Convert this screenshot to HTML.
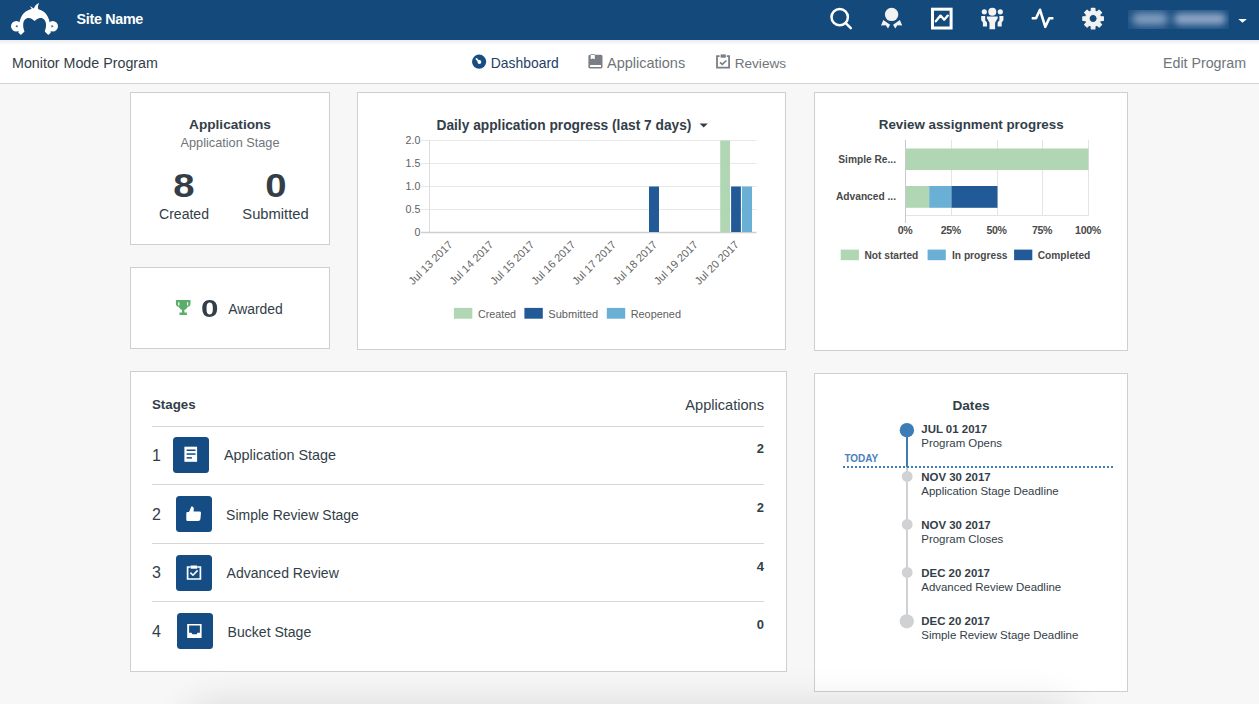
<!DOCTYPE html>
<html><head><meta charset="utf-8">
<style>
*{margin:0;padding:0;box-sizing:border-box}
html,body{width:1259px;height:704px;overflow:hidden;background:#f7f7f7;font-family:"Liberation Sans",sans-serif;color:#333e48}
#hdr{position:absolute;left:0;top:0;width:1259px;height:40px;background:#13497b}
#sub{position:absolute;left:0;top:40px;width:1259px;height:44px;background:#fff;border-bottom:1px solid #d2d2d2}
.card{position:absolute;background:#fff;border:1px solid #cfcfcf}
.t{position:absolute;white-space:nowrap;line-height:1}
svg{position:absolute;overflow:visible}
</style></head><body>
<div id="hdr"></div>
<svg style="left:0;top:0" width="70" height="40" viewBox="0 0 70 40">
<g fill="#fff">
<path d="M39.2,3 C36,4.3 34.2,6.4 33.8,9 L38.2,9.3 C37.6,7 38.1,4.8 39.2,3 Z"/>
<path d="M29.9,5.9 L32,9.6 L35,9.2 Z"/>
<path fill-rule="evenodd" d="M20.9,34.9 L18.3,32.4 L19.3,28.5 C18.3,16.5 25.2,8.8 34.6,8.8 C44,8.8 50.9,16.5 49.9,28.5 L50.9,32.4 L48.3,34.9 L44.7,31.4 C45.9,28.4 46.1,26 46,24.2 C45.8,20.5 43.6,18 40.6,18 C38.1,18 36.2,19.6 34.6,20.9 C33,19.6 31.1,18 28.6,18 C25.6,18 23.4,20.5 23.2,24.2 C23.1,26 23.3,28.4 24.5,31.4 Z"/>
<circle cx="16.3" cy="26.3" r="5.3"/>
<circle cx="52.7" cy="26.3" r="5.3"/>
</g>
<path fill="#13497b" d="M15.4,26.3 L17.5,25 L17.5,27.6 Z"/>
<path fill="#13497b" d="M53.6,26.3 L51.5,25 L51.5,27.6 Z"/>
</svg>
<div class="t" style="top:12.00px;font-size:14.3px;color:#fff;font-weight:bold;letter-spacing:-0.3px;left:76.6px;">Site Name</div>
<svg style="left:820px;top:0" width="440" height="40" viewBox="820 0 440 40">
<g fill="none" stroke="#fff" stroke-width="2.5" stroke-linecap="round">
<circle cx="839.7" cy="17.1" r="8.2"/>
<line x1="846" y1="23.4" x2="850.8" y2="28.2"/>
</g>
<g fill="#f2f2f2">
<circle cx="891.6" cy="14.4" r="6.7"/>
<path d="M883.3,20 L890.1,24.7 L888,28.6 L885.8,25.2 L881,25.6 Z"/>
<path d="M899.9,20 L893.1,24.7 L895.2,28.6 L897.4,25.2 L902.2,25.6 Z"/>
</g>
<rect x="932.5" y="9.2" width="18.6" height="18.8" fill="none" stroke="#fff" stroke-width="3"/>
<polyline points="935.8,21.3 940.5,15.6 944.2,19.7 947.8,15.6" fill="none" stroke="#fff" stroke-width="2.3" stroke-linejoin="round" stroke-linecap="round"/>
<g fill="#f4f4f4">
<circle cx="992.3" cy="11.7" r="4"/>
<circle cx="984.3" cy="11.8" r="2.6"/>
<circle cx="1000.3" cy="11.8" r="2.6"/>
<path d="M986.9,16.5 L997.7,16.5 L997.7,18.3 L995.1,22.8 L995.1,29.3 L989.5,29.3 L989.5,22.8 L986.9,18.3 Z"/>
<path d="M981.2,15.9 L985.2,15.9 L985.2,20.2 L987,22.5 L987,26.5 L982.9,26.5 L982.9,22.5 L981.2,20.2 Z"/>
<path d="M1003.4,15.9 L999.4,15.9 L999.4,20.2 L997.6,22.5 L997.6,26.5 L1001.7,26.5 L1001.7,22.5 L1003.4,20.2 Z"/>
</g>
<polyline points="1031.7,18.3 1036,18.3 1040,9.8 1045.3,26.8 1049.3,18.3 1053.4,18.3" fill="none" stroke="#fff" stroke-width="2.6" stroke-linejoin="round" stroke-linecap="butt"/>
</svg>
<svg style="left:1070px;top:0" width="50" height="40" viewBox="1070 0 50 40">
<path fill="#f2f2f2" stroke="#f2f2f2" stroke-width="1.2" stroke-linejoin="round" fill-rule="evenodd" d="M1103.35,16.84 L1103.35,20.36 L1100.35,20.53 L1099.59,22.36 L1101.59,24.60 L1099.10,27.09 L1096.86,25.09 L1095.03,25.85 L1094.86,28.85 L1091.34,28.85 L1091.17,25.85 L1089.34,25.09 L1087.10,27.09 L1084.61,24.60 L1086.61,22.36 L1085.85,20.53 L1082.85,20.36 L1082.85,16.84 L1085.85,16.67 L1086.61,14.84 L1084.61,12.60 L1087.10,10.11 L1089.34,12.11 L1091.17,11.35 L1091.34,8.35 L1094.86,8.35 L1095.03,11.35 L1096.86,12.11 L1099.10,10.11 L1101.59,12.60 L1099.59,14.84 L1100.35,16.67 Z M1097.1999999999998,18.6 A4.1,4.1 0 1 0 1089.0,18.6 A4.1,4.1 0 1 0 1097.1999999999998,18.6 Z"/>
</svg>
<div style="position:absolute;left:1128px;top:10px;width:101px;height:19px;overflow:hidden;background:#4a729e"><div style="position:absolute;left:-4px;top:-4px;width:110px;height:27px;background:#174c80;filter:blur(3px)"></div><div style="position:absolute;left:4px;top:3px;width:36px;height:12px;background:#8aa4c3;filter:blur(4px);border-radius:5px"></div><div style="position:absolute;left:46px;top:3px;width:52px;height:12px;background:#8ea6c4;filter:blur(3.5px);border-radius:5px"></div></div>
<svg style="left:1230px;top:0" width="29" height="40" viewBox="1230 0 29 40"><path fill="#fff" d="M1238.3,19 L1246.8,19 L1242.55,22.8 Z"/></svg>
<div id="sub"></div>
<div style="position:absolute;left:0;top:40px;width:1259px;height:5px;background:linear-gradient(rgba(20,60,110,0.10),rgba(20,60,110,0))"></div>
<div class="t" style="top:56.00px;font-size:14.28px;color:#333e48;left:12px;">Monitor Mode Program</div>
<svg style="left:460px;top:40px" width="300" height="44" viewBox="460 40 300 44">
<circle cx="479.1" cy="61.7" r="7.1" fill="#184d84"/>
<line x1="476.4" y1="58.8" x2="479.2" y2="61.8" stroke="#fff" stroke-width="1.7" stroke-linecap="round"/><circle cx="479.4" cy="62" r="1.9" fill="#fff"/>
<path fill="#7a7f85" fill-rule="evenodd" d="M589.9,54.7 H601 Q602.5,54.7 602.5,56.2 V67 Q602.5,68.4 601,68.4 H589.9 Q588.4,68.4 588.4,67 V56.2 Q588.4,54.7 589.9,54.7 Z M590.7,54 V59.2 L592.7,58.5 L594.8,59.2 V54 Z M590.1,65 V66.9 H601 V65 Z"/>
<path fill="none" stroke="#7a7f85" stroke-width="1.8" d="M719.6,56.2 L717,56.2 L717,67.7 L729.1,67.7 L729.1,56.2 L726.8,56.2"/>
<rect x="720.6" y="54.4" width="5.2" height="3.3" fill="#7a7f85"/>
<polyline points="720,62.3 722.3,64.4 726.4,60.5" fill="none" stroke="#7a7f85" stroke-width="1.7"/>
</svg>
<div class="t" style="top:57.00px;font-size:13.9px;color:#1e3f66;left:490.8px;">Dashboard</div>
<div class="t" style="top:56.00px;font-size:14.5px;color:#6f757b;left:607px;">Applications</div>
<div class="t" style="top:57.00px;font-size:13.6px;color:#6f757b;left:734.7px;">Reviews</div>
<div class="t" style="top:56.00px;font-size:14.22px;color:#6f757b;right:13px;">Edit Program</div>
<div class="card" style="left:130px;top:92px;width:200px;height:153px"></div>
<div class="card" style="left:130px;top:267px;width:200px;height:82px"></div>
<div class="card" style="left:357px;top:92px;width:429px;height:258px"></div>
<div class="card" style="left:814px;top:92px;width:314px;height:259px"></div>
<div class="card" style="left:130px;top:371px;width:657px;height:301px"></div>
<div class="card" style="left:814px;top:373px;width:314px;height:319px"></div>
<div class="t" style="top:118.00px;font-size:13.67px;color:#333e48;font-weight:bold;left:230px;transform:translateX(-50%);">Applications</div>
<div class="t" style="top:137.00px;font-size:12.72px;color:#6f757b;left:230px;transform:translateX(-50%);">Application Stage</div>
<div class="t" style="top:169.00px;font-size:33px;color:#333e48;font-weight:bold;left:184px;transform:translateX(-50%);transform:translateX(-50%) scaleX(1.16);">8</div>
<div class="t" style="top:169.00px;font-size:33px;color:#333e48;font-weight:bold;left:275.6px;transform:translateX(-50%);transform:translateX(-50%) scaleX(1.16);">0</div>
<div class="t" style="top:207.00px;font-size:14.06px;color:#333e48;left:184px;transform:translateX(-50%);">Created</div>
<div class="t" style="top:207.00px;font-size:14.75px;color:#333e48;left:275.5px;transform:translateX(-50%);">Submitted</div>
<svg style="left:170px;top:295px" width="25" height="25" viewBox="170 295 25 25"><path fill="#5aae6b" fill-rule="evenodd" d="M175.9,300.1 H190.5 V303.6 Q190.5,306.6 187.6,307.1 Q186.3,309.6 184.4,310.1 V312.6 H186.9 V314.9 H179.5 V312.6 H182 V310.1 Q180.1,309.6 178.8,307.1 Q175.9,306.6 175.9,303.6 Z M178.2,302.3 V305.4 H179.4 V302.3 Z M187,302.3 V305.4 H188.2 V302.3 Z"/></svg>
<div class="t" style="top:297.00px;font-size:24.5px;color:#333e48;font-weight:bold;left:201px;transform:scaleX(1.28);transform-origin:0 0;">0</div>
<div class="t" style="top:303.00px;font-size:13.92px;color:#333e48;left:228.2px;">Awarded</div>
<div class="t" style="top:398.00px;font-size:13.3px;color:#333e48;font-weight:bold;left:152px;">Stages</div>
<div class="t" style="top:398.00px;font-size:14.6px;color:#333e48;right:495px;">Applications</div>
<div style="position:absolute;left:152px;top:426px;width:612px;height:1px;background:#d6d6d6"></div>
<div style="position:absolute;left:152px;top:484px;width:612px;height:1px;background:#d6d6d6"></div>
<div style="position:absolute;left:152px;top:543px;width:612px;height:1px;background:#d6d6d6"></div>
<div style="position:absolute;left:152px;top:601px;width:612px;height:1px;background:#d6d6d6"></div>
<div class="t" style="top:448.00px;font-size:16px;color:#333e48;left:152.1px;">1</div>
<div style="position:absolute;left:173.30px;top:437.10px;width:35.6px;height:35.5px;background:#154c83;border-radius:3.5px"></div>
<div class="t" style="top:448.00px;font-size:14.4px;color:#333e48;left:224px;">Application Stage</div>
<div class="t" style="top:442.00px;font-size:13px;color:#333e48;font-weight:bold;right:495px;">2</div>
<div class="t" style="top:507.00px;font-size:16px;color:#333e48;left:152.1px;">2</div>
<div style="position:absolute;left:176.25px;top:496.20px;width:35.6px;height:35.5px;background:#154c83;border-radius:3.5px"></div>
<div class="t" style="top:508.00px;font-size:13.98px;color:#333e48;left:226.1px;">Simple Review Stage</div>
<div class="t" style="top:501.00px;font-size:13px;color:#333e48;font-weight:bold;right:495px;">2</div>
<div class="t" style="top:565.00px;font-size:16px;color:#333e48;left:152.1px;">3</div>
<div style="position:absolute;left:176.30px;top:555.00px;width:35.6px;height:35.5px;background:#154c83;border-radius:3.5px"></div>
<div class="t" style="top:566.00px;font-size:14.02px;color:#333e48;left:226.6px;">Advanced Review</div>
<div class="t" style="top:560.00px;font-size:13px;color:#333e48;font-weight:bold;right:495px;">4</div>
<div class="t" style="top:624.00px;font-size:16px;color:#333e48;left:152.1px;">4</div>
<div style="position:absolute;left:177.20px;top:613.40px;width:35.6px;height:35.5px;background:#154c83;border-radius:3.5px"></div>
<div class="t" style="top:625.00px;font-size:14.07px;color:#333e48;left:227.6px;">Bucket Stage</div>
<div class="t" style="top:618.00px;font-size:13px;color:#333e48;font-weight:bold;right:495px;">0</div>
<svg style="left:0;top:0" width="260" height="704" viewBox="0 0 260 704">
<rect x="184.4" y="446.7" width="12.7" height="15.1" fill="#fff"/>
<g fill="#154c83"><rect x="186.6" y="449.5" width="8.9" height="1.5"/><rect x="186.6" y="453.3" width="8.9" height="1.5"/><rect x="186.6" y="457.1" width="5.3" height="1.5"/></g>
<path fill="#fff" d="M191.3,506.6 Q193.6,506 193.8,508.6 L193.6,511.6 L199.7,511.6 Q201,511.6 201,513 L200.4,519.2 Q200,520.9 198.3,520.9 L187.5,520.9 Q186.3,520.9 186.3,519.7 L186.3,513.3 Q186.3,512.1 187.5,512.1 L189,512.1 Z"/>
<path fill="none" stroke="#fff" stroke-width="1.7" d="M190.6,567 L187.6,567 L187.6,579 L200.4,579 L200.4,567 L197.2,567"/>
<rect x="190.6" y="565.5" width="6.6" height="3.2" fill="#fff"/>
<polyline points="190.4,572.6 193,575.2 197.6,570.4" fill="none" stroke="#fff" stroke-width="1.6"/>
<path fill="#fff" fill-rule="evenodd" d="M187.2,623.9 H201.6 V638 H187.2 Z M189.1,625.4 V632.8 H191.5 L192.4,634.2 H196.6 L197.5,632.8 H199.9 V625.4 Z"/>
</svg>
<div class="t" style="top:399.00px;font-size:13.66px;color:#333e48;font-weight:bold;left:971px;transform:translateX(-50%);">Dates</div>
<div style="position:absolute;left:906px;top:430px;width:2px;height:37px;background:#3d7db5"></div>
<div style="position:absolute;left:906px;top:467px;width:2px;height:154px;background:#d0d1d3"></div>
<svg style="left:0;top:0" width="1259" height="704" viewBox="0 0 1259 704"><circle cx="906.9" cy="430.2" r="7.2" fill="#3d7db5"/><circle cx="907.2" cy="476.4" r="5.4" fill="#d0d1d3"/><circle cx="907.2" cy="524.4" r="5.4" fill="#d0d1d3"/><circle cx="907.2" cy="572.4" r="5.4" fill="#d0d1d3"/><circle cx="906.8" cy="621.3" r="7.1" fill="#d0d1d3"/><line x1="843" y1="467" x2="1114" y2="467" stroke="#3d7db5" stroke-width="2" stroke-dasharray="2 2"/></svg>
<div class="t" style="top:454.00px;font-size:10px;color:#4a82b8;font-weight:bold;left:844.4px;">TODAY</div>
<div class="t" style="top:424.00px;font-size:11.45px;color:#333e48;font-weight:bold;left:921.3px;">JUL 01 2017</div>
<div class="t" style="top:438.00px;font-size:11.45px;color:#333e48;left:921.3px;">Program Opens</div>
<div class="t" style="top:472.00px;font-size:11.45px;color:#333e48;font-weight:bold;left:921.3px;">NOV 30 2017</div>
<div class="t" style="top:486.00px;font-size:11.45px;color:#333e48;left:921.3px;">Application Stage Deadline</div>
<div class="t" style="top:520.00px;font-size:11.45px;color:#333e48;font-weight:bold;left:921.3px;">NOV 30 2017</div>
<div class="t" style="top:534.00px;font-size:11.45px;color:#333e48;left:921.3px;">Program Closes</div>
<div class="t" style="top:568.00px;font-size:11.45px;color:#333e48;font-weight:bold;left:921.3px;">DEC 20 2017</div>
<div class="t" style="top:582.00px;font-size:11.45px;color:#333e48;left:921.3px;">Advanced Review Deadline</div>
<div class="t" style="top:616.00px;font-size:11.45px;color:#333e48;font-weight:bold;left:921.3px;">DEC 20 2017</div>
<div class="t" style="top:630.00px;font-size:11.45px;color:#333e48;left:921.3px;">Simple Review Stage Deadline</div>
<div class="t" style="top:119.00px;font-size:13.74px;color:#333e48;font-weight:bold;left:436.5px;">Daily application progress (last 7 days)</div>
<svg style="left:0;top:0" width="1259" height="704" viewBox="0 0 1259 704" font-family="Liberation Sans, sans-serif"><path fill="#333e48" d="M699.6,123.4 L707.8,123.4 L703.7,127.4 Z"/><line x1="421" y1="140.5" x2="756.5" y2="140.5" stroke="#e8e8e8" stroke-width="1"/><text x="420.4" y="144.0" font-size="10.65" fill="#606060" text-anchor="end">2.0</text><line x1="421" y1="163.5" x2="756.5" y2="163.5" stroke="#e8e8e8" stroke-width="1"/><text x="420.4" y="167.0" font-size="10.65" fill="#606060" text-anchor="end">1.5</text><line x1="421" y1="186.5" x2="756.5" y2="186.5" stroke="#e8e8e8" stroke-width="1"/><text x="420.4" y="190.0" font-size="10.65" fill="#606060" text-anchor="end">1.0</text><line x1="421" y1="209.5" x2="756.5" y2="209.5" stroke="#e8e8e8" stroke-width="1"/><text x="420.4" y="213.0" font-size="10.65" fill="#606060" text-anchor="end">0.5</text><text x="420.4" y="236.0" font-size="10.65" fill="#606060" text-anchor="end">0</text><line x1="429.5" y1="140" x2="429.5" y2="232" stroke="#dcdcdc" stroke-width="1"/><line x1="421" y1="232.5" x2="756.5" y2="232.5" stroke="#cfcfcf" stroke-width="1.6"/><rect x="649" y="186.5" width="10" height="45.5" fill="#215a96"/><rect x="720.2" y="140.5" width="9.8" height="91.5" fill="#b1d6b3"/><rect x="731.1" y="186.5" width="9.8" height="45.5" fill="#215a96"/><rect x="741.9" y="186.5" width="10.1" height="45.5" fill="#6ab0d4"/><text x="453.3" y="245.3" font-size="11" fill="#666" text-anchor="end" transform="rotate(-45 453.3 245.3)">Jul 13 2017</text><text x="494.2" y="245.3" font-size="11" fill="#666" text-anchor="end" transform="rotate(-45 494.2 245.3)">Jul 14 2017</text><text x="535.1" y="245.3" font-size="11" fill="#666" text-anchor="end" transform="rotate(-45 535.1 245.3)">Jul 15 2017</text><text x="576.0" y="245.3" font-size="11" fill="#666" text-anchor="end" transform="rotate(-45 576.0 245.3)">Jul 16 2017</text><text x="616.9" y="245.3" font-size="11" fill="#666" text-anchor="end" transform="rotate(-45 616.9 245.3)">Jul 17 2017</text><text x="657.8" y="245.3" font-size="11" fill="#666" text-anchor="end" transform="rotate(-45 657.8 245.3)">Jul 18 2017</text><text x="698.7" y="245.3" font-size="11" fill="#666" text-anchor="end" transform="rotate(-45 698.7 245.3)">Jul 19 2017</text><text x="739.6" y="245.3" font-size="11" fill="#666" text-anchor="end" transform="rotate(-45 739.6 245.3)">Jul 20 2017</text><rect x="453.9" y="307.9" width="18.4" height="10.8" fill="#b1d6b3"/><text x="478" y="317.8" font-size="10.7" fill="#606060">Created</text><rect x="524.4" y="307.9" width="18.4" height="10.8" fill="#215a96"/><text x="548.3" y="317.8" font-size="11.05" fill="#606060">Submitted</text><rect x="606.8" y="307.9" width="18.4" height="10.8" fill="#6ab0d4"/><text x="630.7" y="317.8" font-size="10.9" fill="#606060">Reopened</text></svg>
<div class="t" style="top:118.00px;font-size:13.37px;color:#333e48;font-weight:bold;left:971.2px;transform:translateX(-50%);">Review assignment progress</div>
<svg style="left:0;top:0" width="1259" height="704" viewBox="0 0 1259 704" font-family="Liberation Sans, sans-serif"><line x1="951.5" y1="140" x2="951.5" y2="215.5" stroke="#e4e4e4" stroke-width="1"/><line x1="997.5" y1="140" x2="997.5" y2="215.5" stroke="#e4e4e4" stroke-width="1"/><line x1="1042.5" y1="140" x2="1042.5" y2="215.5" stroke="#e4e4e4" stroke-width="1"/><line x1="1088.5" y1="140" x2="1088.5" y2="215.5" stroke="#e4e4e4" stroke-width="1"/><line x1="905.5" y1="215.5" x2="1088.5" y2="215.5" stroke="#e4e4e4" stroke-width="1"/><line x1="905.5" y1="140" x2="905.5" y2="223" stroke="#c9c9c9" stroke-width="1"/><rect x="906" y="148.5" width="182.5" height="21.5" fill="#b1d6b3"/><rect x="906" y="186" width="23.2" height="21.8" fill="#b1d6b3"/><rect x="929.2" y="186" width="22.3" height="21.8" fill="#6ab0d4"/><rect x="951.5" y="186" width="46" height="21.8" fill="#215a96"/><text x="896" y="162.9" font-size="10.2" fill="#4a4a4a" font-weight="bold" text-anchor="end" letter-spacing="0">Simple Re...</text><text x="896" y="199.5" font-size="10.2" fill="#4a4a4a" font-weight="bold" text-anchor="end" letter-spacing="0">Advanced ...</text><text x="905" y="233.8" font-size="10.6" fill="#4a4a4a" font-weight="bold" text-anchor="middle" letter-spacing="-0.3">0%</text><text x="950.8" y="233.8" font-size="10.6" fill="#4a4a4a" font-weight="bold" text-anchor="middle" letter-spacing="-0.3">25%</text><text x="996.6" y="233.8" font-size="10.6" fill="#4a4a4a" font-weight="bold" text-anchor="middle" letter-spacing="-0.3">50%</text><text x="1042.1" y="233.8" font-size="10.6" fill="#4a4a4a" font-weight="bold" text-anchor="middle" letter-spacing="-0.3">75%</text><text x="1088" y="233.8" font-size="10.6" fill="#4a4a4a" font-weight="bold" text-anchor="middle" letter-spacing="-0.3">100%</text><rect x="840.7" y="249.6" width="18.2" height="10.6" fill="#b1d6b3"/><text x="864.5" y="259" font-size="10.2" fill="#4a4a4a" font-weight="bold" letter-spacing="0">Not started</text><rect x="927.6" y="249.6" width="18.2" height="10.6" fill="#6ab0d4"/><text x="952" y="259" font-size="10.2" fill="#4a4a4a" font-weight="bold" letter-spacing="0">In progress</text><rect x="1014.1" y="249.6" width="18.2" height="10.6" fill="#215a96"/><text x="1037.7" y="259" font-size="10.2" fill="#4a4a4a" font-weight="bold" letter-spacing="0">Completed</text></svg>
<div style="position:absolute;left:195px;top:712px;width:870px;height:40px;border-radius:20px;background:#888;box-shadow:0 0 36px 12px rgba(0,0,0,0.10);z-index:50"></div>
</body></html>
